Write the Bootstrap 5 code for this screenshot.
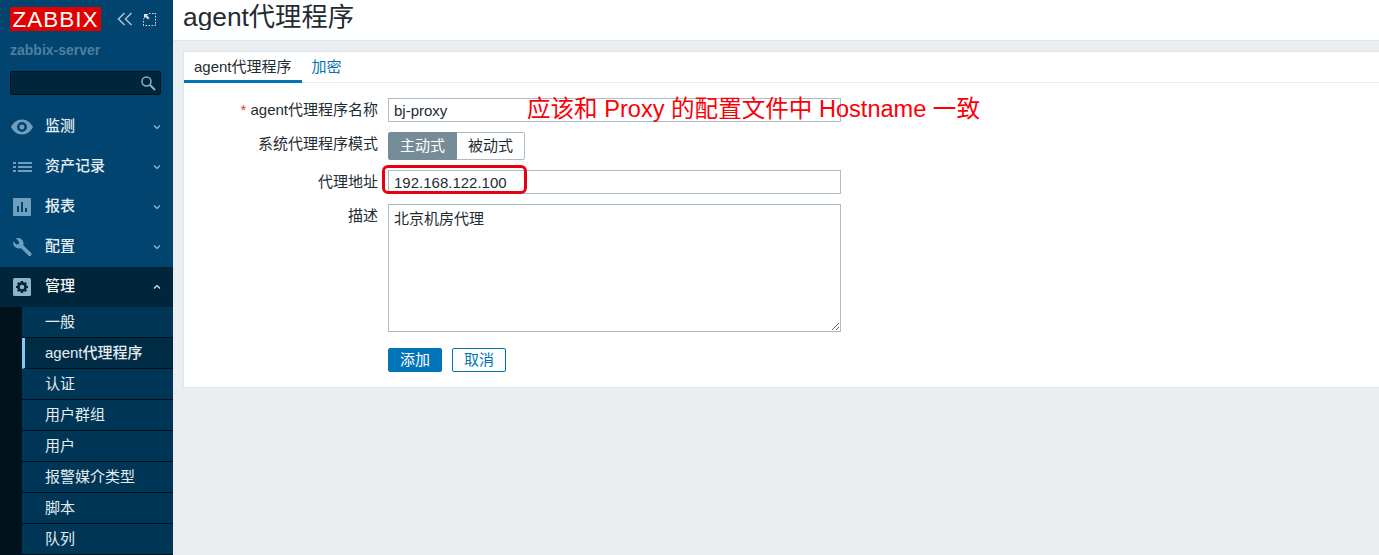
<!DOCTYPE html>
<html lang="zh-CN">
<head>
    <meta charset="UTF-8">
    <meta name="viewport" content="width=device-width, initial-scale=1.0">
    <title>agent代理程序</title>
    <link href="https://cdn.jsdelivr.net/npm/bootstrap@5.3.0/dist/css/bootstrap.min.css" rel="stylesheet">
    <style>
        html, body {
            height: 100%;
            overflow: hidden;
        }
        body {
            font-family: "Liberation Sans", "Noto Sans CJK SC", sans-serif;
            font-size: 15px;
            color: #1f2c33;
            background-color: #ebeef0;
            position: relative;
        }
        .page-wrap {
            height: 555px;
        }
        /* sidebar */
        .side-bar {
            width: 173px;
            height: 555px;
            background-color: #00446f;
            overflow: hidden;
        }
        .side-top {
            height: 107px;
            padding: 7px 10px 0;
        }
        .zbx-logo {
            width: 91px;
            height: 24px;
            background-color: #e00000;
            color: #fff;
            font-size: 22.5px;
            line-height: 25px;
            letter-spacing: 1px;
            text-align: center;
        }
        .top-icons {
            margin-left: 16px;
            gap: 10px;
        }
        .srv-name {
            margin-top: 11px;
            height: 16px;
            line-height: 16px;
            font-size: 14px;
            font-weight: 700;
            color: #50809f;
        }
        .search-box {
            margin-top: 13px;
            width: 151px;
            height: 24px;
            background-color: #00263b;
            border: 1px solid #001521;
            border-radius: 2px;
            padding-right: 4px;
        }
        .menu-row {
            height: 40px;
            padding-left: 11px;
            padding-right: 12px;
            padding-bottom: 1px;
            color: #e4edf2;
            font-weight: 500;
            font-size: 15px;
        }
        .menu-row.open {
            background-color: #00263b;
            color: #f4f7f9;
        }
        .menu-ico {
            width: 22px;
            margin-right: 12px;
            flex-shrink: 0;
        }
        .sub-wrap {
            background-color: #00131d;
            padding-left: 22px;
        }
        .sub-row {
            height: 31px;
            padding-left: 23px;
            background-color: #003655;
            border-bottom: 1px solid #00131d;
            color: #e4edf2;
            font-size: 15px;
            line-height: 29px;
        }
        .sub-row.current {
            background-color: #002b45;
            border-left: 3px solid #7fcbf5;
            padding-left: 20px;
            font-weight: 500;
        }
        /* main area */
        .main-area {
            min-width: 0;
        }
        .head-bar {
            height: 41px;
            background-color: #fff;
            border-bottom: 1px solid #dfe4e7;
            padding-left: 10px;
        }
        .head-title {
            height: 30px;
            overflow: hidden;
            margin: 0;
            font-size: 26.3px;
            font-weight: 400;
            line-height: 34px;
            color: #1f2c33;
        }
        .form-card {
            margin: 10px 0 0 10px;
            height: 337px;
            background-color: #fff;
            border: 1px solid #dfe4e7;
            border-right: 0;
        }
        .tab-line {
            height: 31px;
            border-bottom: 1px solid #ebeef0;
        }
        .tab-item {
            padding: 0 10px;
            height: 31px;
            line-height: 29px;
            color: #1f2c33;
        }
        .tab-item.on {
            border-bottom: 3px solid #0275b8;
        }
        .tab-item.other {
            color: #0275b8;
        }
        .form-body {
            padding-top: 15px;
        }
        .form-line {
            margin-bottom: 10px;
        }
        .lbl {
            width: 194px;
            margin-right: 10px;
            text-align: right;
            line-height: 24px;
            color: #1f2c33;
            flex-shrink: 0;
        }
        .req {
            color: #e33734;
        }
        .zbx-input.form-control {
            width: 453px;
            height: 24px;
            min-height: 0;
            padding: 0 5px;
            border: 1px solid #acbbc7;
            border-radius: 0;
            font-size: 15px;
            line-height: 22px;
            color: #1f2c33;
        }
        textarea.zbx-input.form-control {
            height: 128px;
            padding: 4px 5px;
            line-height: 20px;
        }
        .mode-group .btn {
            height: 28px;
            padding: 0;
            width: 69px;
            font-size: 15px;
            line-height: 26px;
            border-radius: 2px;
            border: 1px solid #acbbc7;
            color: #1f2c33;
            background: #fff;
        }
        .mode-group .btn.active {
            background-color: #768d99;
            border-color: #768d99;
            color: #fff;
        }
        .act-row {
            margin: 16px 0 0 204px;
            gap: 10px;
        }
        .act-row .btn {
            width: 54px;
            height: 24px;
            padding: 0;
            font-size: 15px;
            line-height: 22px;
            border-radius: 2px;
            border: 1px solid #0275b8;
        }
        .act-row .btn-primary {
            background-color: #0275b8;
        }
        .act-row .btn-outline-primary {
            color: #0275b8;
            background: #fff;
        }
        /* red marks drawn over the screenshot */
        .note-text {
            position: absolute;
            left: 527px;
            top: 94px;
            font-size: 23.57px;
            line-height: 30px;
            color: #fb0007;
            white-space: nowrap;
        }
        .note-box {
            position: absolute;
            left: 382px;
            top: 165px;
            width: 145px;
            height: 29px;
            border: 3px solid #e60012;
            border-radius: 6px;
        }
    </style>
</head>
<body>
    <div class="page-wrap d-flex">
        <div class="side-bar flex-shrink-0">
            <div class="side-top">
                <div class="d-flex align-items-center">
                    <div class="zbx-logo">ZABBIX</div>
                    <div class="top-icons d-flex align-items-center">
                        <svg width="16" height="14" viewBox="0 0 16 14" fill="none" stroke="#a9c4d6" stroke-width="1.5"><path d="M7.5 1 1.5 7l6 6M14.5 1l-6 6 6 6"/></svg>
                        <svg width="13" height="13" viewBox="0 0 13 13" fill="none" stroke="#d5e3ec"><path d="M6 .5h1.5M9 .5h1.5M11.5 .5h1v1M12.5 3v1.500M12.500 6v1.500M12.500 9v1.500M12.500 11.500v1h-1M10 12.500H8.500M7 12.500H5.500M4 12.500H2.500M1 12.500H.5V11M.5 9.500V8M.5 6.500V5.500" /><path d="M1 1h4.500L4 2.500 6.500 5 5 6.500 2.500 4 1 5.500z" fill="#d5e3ec" stroke="none"/></svg>
                    </div>
                </div>
                <div class="srv-name">zabbix-server</div>
                <div class="search-box d-flex align-items-center justify-content-end">
                    <svg width="16" height="16" viewBox="0 0 16 16" fill="none" stroke="#8fb0c4" stroke-width="1.500"><circle cx="6.500" cy="6.500" r="4.500"/><path d="m10 10 5 5" stroke-width="2"/></svg>
                </div>
            </div>

            <div class="menu-row d-flex align-items-center">
                <svg class="menu-ico" height="18" viewBox="0 0 22 18" fill="#6f9fbd"><path fill-rule="evenodd" d="M11 1.500C6 1.500 2 5 0 9c2 4 6 7.500 11 7.500S20 13 22 9c-2-4-6-7.500-11-7.500ZM11 4a5 5 0 1 1 0 10 5 5 0 0 1 0-10Zm0 2.500a2.500 2.500 0 1 0 0 5 2.500 2.500 0 0 0 0-5Z"/></svg>
                <span class="flex-grow-1">监测</span>
                <svg width="8" height="6" viewBox="0 0 8 6" fill="none" stroke="#9dbccf" stroke-width="1.200"><path d="m1 1.500 3 3 3-3"/></svg>
            </div>
            <div class="menu-row d-flex align-items-center">
                <svg class="menu-ico" height="12" viewBox="0 0 22 12" fill="#6f9fbd"><path d="M2 1h3v2H2zM7 1h14v2H7zM2 5h3v2H2zM7 5h14v2H7zM2 9h3v2H2zM7 9h14v2H7z"/></svg>
                <span class="flex-grow-1">资产记录</span>
                <svg width="8" height="6" viewBox="0 0 8 6" fill="none" stroke="#9dbccf" stroke-width="1.200"><path d="m1 1.500 3 3 3-3"/></svg>
            </div>
            <div class="menu-row d-flex align-items-center">
                <svg class="menu-ico" height="18" viewBox="0 0 22 18" fill="#6f9fbd"><path fill-rule="evenodd" d="M3 0h16a1 1 0 0 1 1 1v16a1 1 0 0 1-1 1H3a1 1 0 0 1-1-1V1a1 1 0 0 1 1-1Zm3 8v6h2V8Zm4-4v10h2V4Zm4 6v4h2v-4Z"/></svg>
                <span class="flex-grow-1">报表</span>
                <svg width="8" height="6" viewBox="0 0 8 6" fill="none" stroke="#9dbccf" stroke-width="1.200"><path d="m1 1.500 3 3 3-3"/></svg>
            </div>
            <div class="menu-row d-flex align-items-center">
                <svg class="menu-ico" height="18" viewBox="0 0 22 18" fill="#6f9fbd"><path d="M7 0a5.500 5.500 0 0 1 5.200 7.300L20 14.800a1.800 1.800 0 0 1-2.600 2.600L9.800 10A5.500 5.500 0 0 1 2.300 3.500L5.500 6.600 8 6V3.500L5 .4C5.600.1 6.300 0 7 0Z"/></svg>
                <span class="flex-grow-1">配置</span>
                <svg width="8" height="6" viewBox="0 0 8 6" fill="none" stroke="#9dbccf" stroke-width="1.200"><path d="m1 1.500 3 3 3-3"/></svg>
            </div>
            <div class="menu-row open d-flex align-items-center">
                <svg class="menu-ico" height="18" viewBox="0 0 22 18"><rect x="2" width="18" height="18" rx="1.500" fill="#8db4cd"/><circle cx="11" cy="9" r="3.600" fill="none" stroke="#00263b" stroke-width="2.600"/><path d="M11 3v2.500M11 12.500V15M5 9h2.500M14.500 9H17M6.800 4.800l1.800 1.800M13.400 11.400l1.800 1.800M15.200 4.800l-1.800 1.800M8.600 11.400l-1.800 1.800" stroke="#00263b" stroke-width="2.200"/></svg>
                <span class="flex-grow-1">管理</span>
                <svg width="8" height="6" viewBox="0 0 8 6" fill="none" stroke="#dfe9ef" stroke-width="1.200"><path d="m1 4.500 3-3 3 3"/></svg>
            </div>
            <div class="sub-wrap">
                <div class="sub-row">一般</div>
                <div class="sub-row current">agent代理程序</div>
                <div class="sub-row">认证</div>
                <div class="sub-row">用户群组</div>
                <div class="sub-row">用户</div>
                <div class="sub-row">报警媒介类型</div>
                <div class="sub-row">脚本</div>
                <div class="sub-row">队列</div>
            </div>
        </div>

        <div class="main-area flex-grow-1">
            <div class="head-bar">
                <h1 class="head-title">agent代理程序</h1>
            </div>
            <div class="form-card">
                <div class="tab-line d-flex">
                    <div class="tab-item on">agent代理程序</div>
                    <div class="tab-item other">加密</div>
                </div>
                <form class="form-body">
                    <div class="form-line d-flex">
                        <label class="lbl"><span class="req">*</span> agent代理程序名称</label>
                        <input class="zbx-input form-control" type="text" value="bj-proxy">
                    </div>
                    <div class="form-line d-flex">
                        <label class="lbl">系统代理程序模式</label>
                        <div class="mode-group btn-group">
                            <button type="button" class="btn active">主动式</button>
                            <button type="button" class="btn">被动式</button>
                        </div>
                    </div>
                    <div class="form-line d-flex">
                        <label class="lbl">代理地址</label>
                        <input class="zbx-input form-control" type="text" value="192.168.122.100">
                    </div>
                    <div class="form-line d-flex">
                        <label class="lbl">描述</label>
                        <textarea class="zbx-input form-control">北京机房代理</textarea>
                    </div>
                    <div class="act-row d-flex">
                        <button type="button" class="btn btn-primary">添加</button>
                        <button type="button" class="btn btn-outline-primary">取消</button>
                    </div>
                </form>
            </div>
        </div>
    </div>

    <div class="note-text">应该和 Proxy 的配置文件中 Hostname 一致</div>
    <div class="note-box"></div>
</body>
</html>
